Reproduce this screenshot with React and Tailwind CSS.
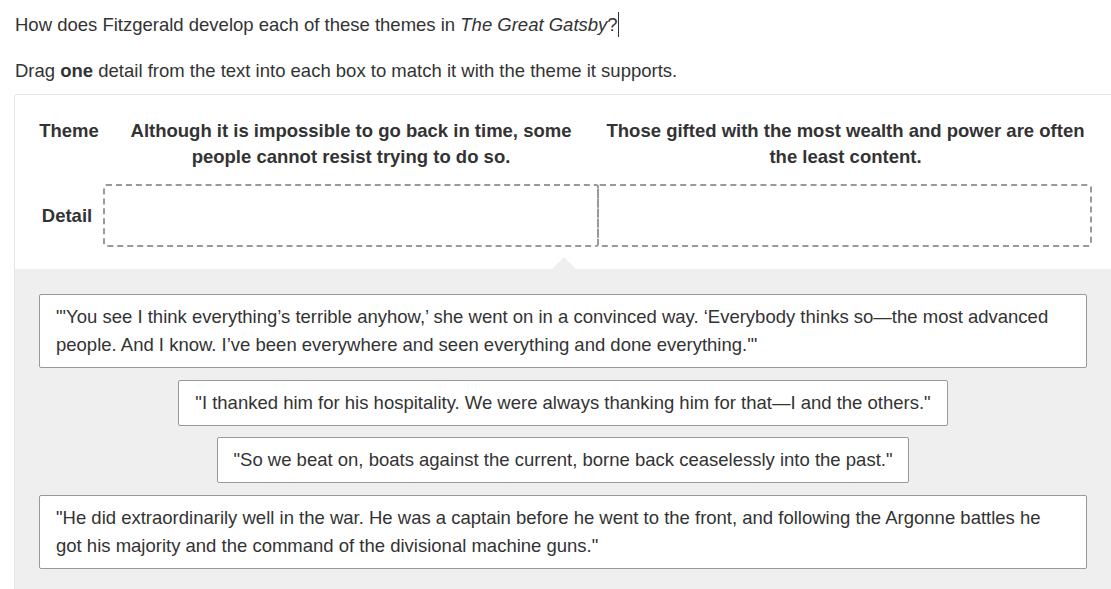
import React from 'react';

const details = [
  {
    id: 1,
    text: '"\'You see I think everything\u2019s terrible anyhow,\u2019 she went on in a convinced way. \u2018Everybody thinks so\u2014the most advanced people. And I know. I\u2019ve been everywhere and seen everything and done everything.\'"',
  },
  { id: 2, text: '"I thanked him for his hospitality. We were always thanking him for that\u2014I and the others."' },
  { id: 3, text: '"So we beat on, boats against the current, borne back ceaselessly into the past."' },
  {
    id: 4,
    text: '"He did extraordinarily well in the war. He was a captain before he went to the front, and following the Argonne battles he got his majority and the command of the divisional machine guns."',
  },
];

export default function App() {
  return (
    <div className="min-h-screen bg-white text-[#333] text-[18.5px] font-['Liberation_Sans',Arial,sans-serif] overflow-hidden">
      {/* Prompt */}
      <div className="pl-[15px] pt-[12px]">
        <p className="leading-[26px]">
          How does Fitzgerald develop each of these themes in <em>The Great Gatsby</em>?
          <span className="inline-block w-px h-[25px] bg-[#333] align-top"></span>
        </p>
        <p className="leading-[26px] mt-[20px]">
          Drag <strong>one</strong> detail from the text into each box to match it with the theme it supports.
        </p>
      </div>

      {/* Panel */}
      <div className="ml-[14px] mt-[10px] border border-r-0 border-b-0 border-[#e5e5e5] rounded-tl-[4px]">
        <div className="grid grid-cols-[88px_496px_493px] pt-[23px] pb-[22px]">
          <div className="pl-[20px] text-center font-bold leading-[26px]">Theme</div>
          <div className="text-center font-bold leading-[26px] px-2">
            Although it is impossible to go back in time, some people cannot resist trying to do so.
          </div>
          <div className="text-center font-bold leading-[26px]">
            Those gifted with the most wealth and power are often the least content.
          </div>

          <div className="pl-[16px] text-center font-bold flex items-center justify-center mt-[14px]">Detail</div>
          <div className="mt-[14px] h-[63px] border-2 border-dashed border-[#999] rounded-[3px]"></div>
          <div className="mt-[14px] h-[63px] border-2 border-dashed border-[#999] rounded-[3px] -ml-[2px]"></div>
        </div>

        {/* Detail bank */}
        <div className="relative bg-[#efefef] px-6 pt-[25px] pb-[24px] flex flex-col items-center gap-[11.5px]">
          <div className="absolute -top-[12px] left-[537px] w-0 h-0 border-x-[12px] border-x-transparent border-b-[12px] border-b-[#efefef]"></div>
          {details.map((d) => (
            <div
              key={d.id}
              className="bg-white border border-[#999] rounded-[2px] px-[16px] py-[8px] leading-[28px] text-left max-w-full"
            >
              {d.text}
            </div>
          ))}
        </div>
      </div>
    </div>
  );
}
